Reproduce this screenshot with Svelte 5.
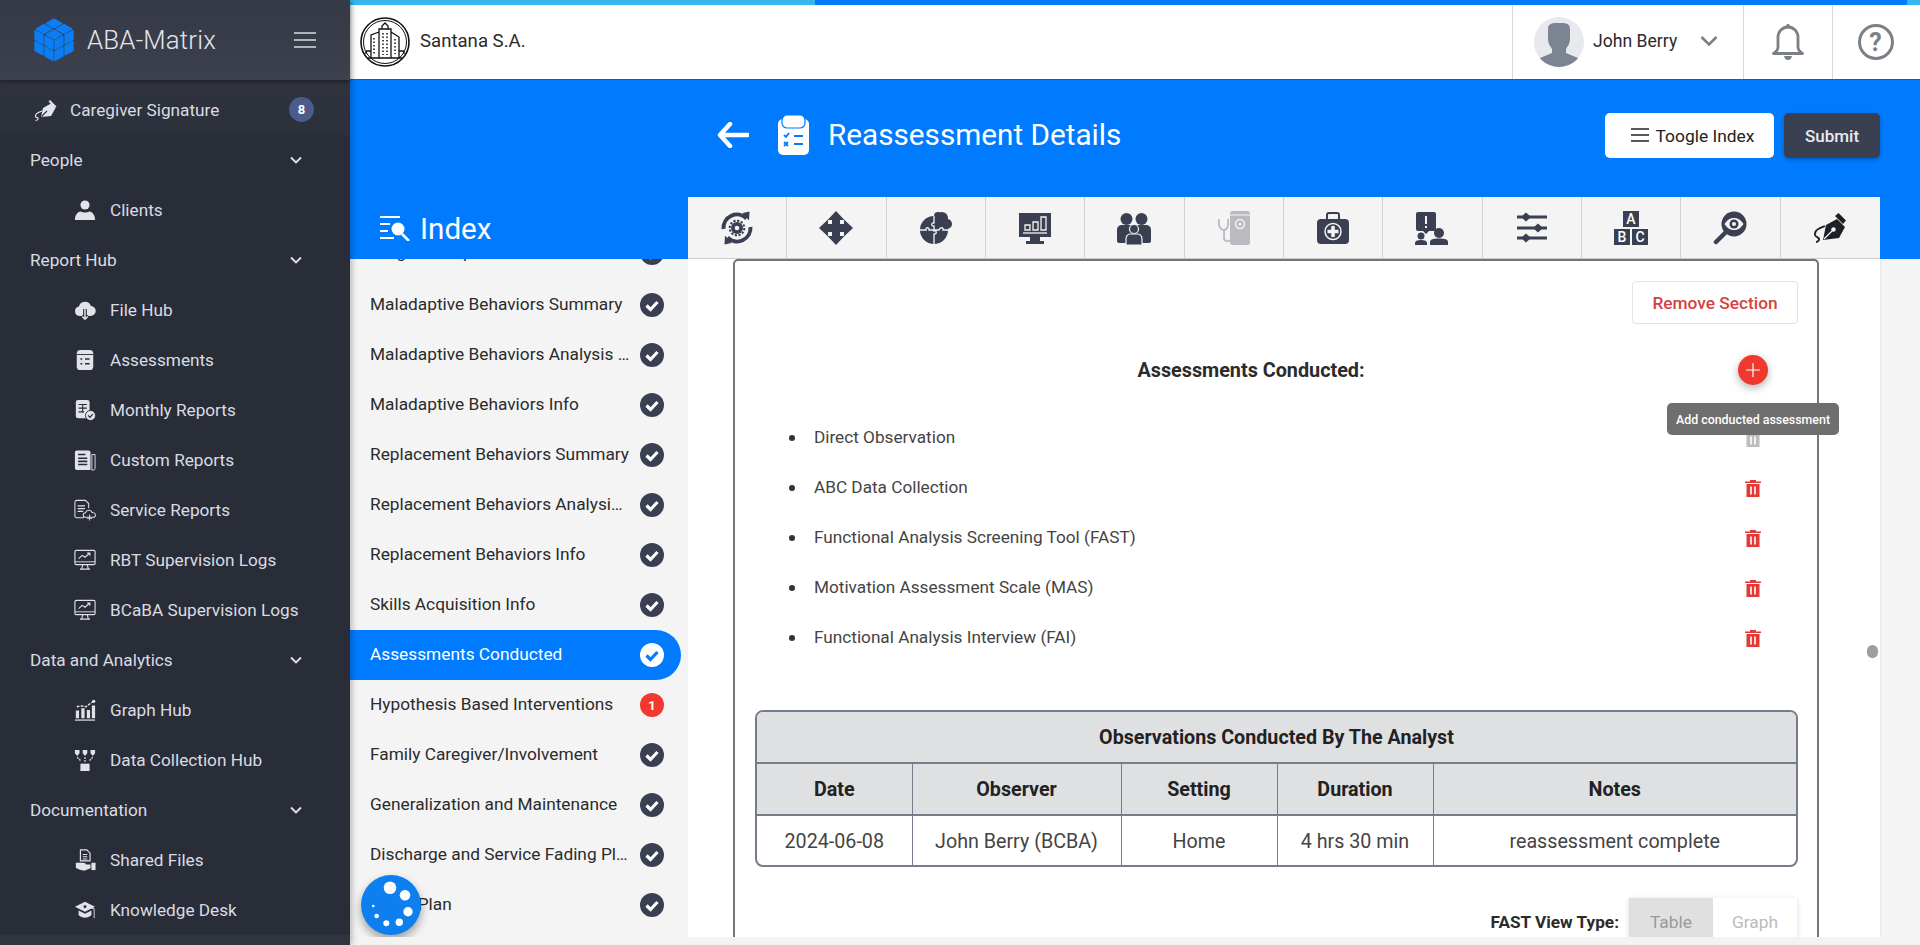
<script>
  const tiles = [];
  const add = (o, u, v) => {
    for (let i = 0; i < 2; i++) for (let j = 0; j < 2; j++) {
      const p = [[i, j], [i + 1, j], [i + 1, j + 1], [i, j + 1]].map(([a, b]) => {
        const ca = i + 0.5, cb = j + 0.5;
        const x = ca + (a - ca) * 0.74, y = cb + (b - cb) * 0.74;
        return `${(o[0] + x * u[0] + y * v[0]).toFixed(1)},${(o[1] + x * u[1] + y * v[1]).toFixed(1)}`;
      });
      tiles.push(p.join(' '));
    }
  };
  add([22, 2], [10, 5.5], [-10, 5.5]);
  add([2, 13], [10, 5.5], [0, 11]);
  add([22, 24], [10, -5.5], [0, 11]);

  const side = {
    pen: '<path d="M7 19l2-9 8-4.500 4.500 4.500-4.500 8z" fill="currentColor"/><path d="M16 2l6.500 6.500-1.500 1.500-6.500-6.500z" fill="currentColor"/><path d="M7.500 18.500l5.500-5.500" stroke="#2e323d" stroke-width="1.100"/><path d="M8 13c-3 1-7 3-6.500 5.500.5 2 3.500 0 2.500 2.500-.5 1-1.500 1.500-2.500 1.500" fill="none" stroke="currentColor" stroke-width="1.200"/>',
    user: '<circle cx="12" cy="6.500" r="5" fill="currentColor"/><path d="M1 23c0-6 3-9 6-9.500 3 1.500 7 1.500 10 0 3 .5 6 3.500 6 9.500z" fill="currentColor"/>',
    cloud: '<path d="M6 18.500a5.200 5.200 0 0 1-.6-10.300A6.800 6.800 0 0 1 18.400 7.500 5.500 5.500 0 0 1 18 18.500z" fill="currentColor"/><path d="M12 11v11M8.500 18.500l3.500 3.500 3.500-3.500" fill="none" stroke="#292d38" stroke-width="4"/><path d="M12 11v11M9 19l3 3 3-3" fill="none" stroke="currentColor" stroke-width="1.600"/>',
    clip: '<rect x="3" y="1" width="18" height="22" rx="4" fill="currentColor"/><path d="M3 6h18" stroke="#292d38" stroke-width="1"/><path d="M7 11h2M7 16h2M12 11h5M12 16h5" stroke="#292d38" stroke-width="1.700"/>',
    doccheck: '<rect x="2" y="1" width="15" height="20" rx="2.500" fill="currentColor"/><path d="M5 6h9M5 10h9M5 14h6M9.500 6v9" stroke="#292d38" stroke-width="1.200"/><circle cx="18" cy="18" r="5.500" fill="currentColor" stroke="#292d38"/><path d="M15.500 18l2 2 3-3.500" fill="none" stroke="#292d38" stroke-width="1.300"/>',
    news: '<path d="M1 3.500A2 2 0 0 1 3 1.500h13a2 2 0 0 1 2 2v19.500H3a2 2 0 0 1-2-2z" fill="currentColor"/><path d="M19.500 6H23v15a2 2 0 0 1-2 2h-1.500z" fill="none" stroke="currentColor" stroke-width="1"/><path d="M4.500 6h8M4.500 10h10M4.500 13.500h10M4.500 17h10" stroke="#292d38" stroke-width="1.700"/>',
    doccloud: '<path d="M16 10V5l-3.500-3.500H3A2 2 0 0 0 1 3.500v15a2 2 0 0 0 2 2h8" fill="none" stroke="currentColor" stroke-width="1.100"/><path d="M4 7.500h8M4 10.500h8M4 13.500h6" stroke="currentColor" stroke-width="1.300"/><path d="M12.500 20a2.500 2.500 0 0 1 0-5 4 4 0 0 1 7.500 0 2.500 2.500 0 0 1 1.500 5z" fill="none" stroke="currentColor" stroke-width="1.100"/><path d="M17 17v6.500M14 21h6" stroke="currentColor" stroke-width="1"/>',
    mon: '<rect x="1" y="1.500" width="22" height="15.500" rx="1.500" fill="none" stroke="currentColor" stroke-width="1.200"/><path d="M1 14h22" stroke="currentColor"/><path d="M5 10.500l4-3.500 3 2 5-4.500M14.500 4.500h2.800v2.800" fill="none" stroke="currentColor" stroke-width="1.200"/><path d="M9.500 17l-1 4.500M14.500 17l1 4.500M6.500 22h11" fill="none" stroke="currentColor" stroke-width="1.200"/>',
    graph: '<path d="M2 12.500h3.500V21H2zM8 10h3.500v11H8zM14 12h3.500v9H14zM19.500 7H23v14h-3.500z" fill="currentColor"/><path d="M1 23h22" stroke="currentColor" stroke-width="1.300"/><path d="M3 8.500l5-1 5 1 8-6" fill="none" stroke="currentColor" stroke-width="1.600" stroke-dasharray="3 1.400"/><circle cx="21.500" cy="2.500" r="1.800" fill="currentColor"/>',
    funnel: '<path d="M1 1h5v3.500l-2.500 3-2.500-3zM9.500 1h5v3.500l-2.500 3-2.500-3zM18 1h5v3.500l-2.500 3-2.500-3z" fill="currentColor"/><path d="M3.500 9l4 4M12 9v5M20.500 9l-4 4" stroke="currentColor" stroke-width="1.400" stroke-dasharray="2 1"/><rect x="7" y="16" width="10" height="8" fill="currentColor"/>',
    hand: '<path d="M7 1h7l3.500 3.500V13H7z" fill="none" stroke="currentColor" stroke-width="1.300"/><path d="M9.500 6h5M9.500 8.500h5M9.500 11h5" stroke="currentColor" stroke-width="1.100"/><path d="M2 15h8c2 0 3 1 3 2h5v4l-6 2.500c-3 0-6-1-8-2l-2-1z" fill="currentColor"/><rect x="19" y="15" width="4.500" height="8" fill="currentColor"/>',
    cap: '<path d="M12 3L1 8.500 12 14l11-5.500z" fill="currentColor"/><path d="M5 12.500v5c2 2 4.500 3 7 3s5-1 7-3v-5l-7 3.500z" fill="currentColor"/><path d="M12 8.500l10 2V21" fill="none" stroke="currentColor" stroke-width="1"/><circle cx="12" cy="8.500" r="1.600" fill="#292d38"/>'
  };

  const nav = [
    { h: 'People', items: [['user', 'Clients']] },
    { h: 'Report Hub', items: [['cloud', 'File Hub'], ['clip', 'Assessments'], ['doccheck', 'Monthly Reports'], ['news', 'Custom Reports'], ['doccloud', 'Service Reports'], ['mon', 'RBT Supervision Logs'], ['mon', 'BCaBA Supervision Logs']] },
    { h: 'Data and Analytics', items: [['graph', 'Graph Hub'], ['funnel', 'Data Collection Hub']] },
    { h: 'Documentation', items: [['hand', 'Shared Files'], ['cap', 'Knowledge Desk']] }
  ];

  const D = '#3a3f51';
  const W = '#f4f4f5';
  const tabs = [
    `<path d="M3.500 18A13.500 13.500 0 0 1 26.500 7.500M30.500 16A13.500 13.500 0 0 1 7.500 26.500" fill="none" stroke="${D}" stroke-width="4"/><path d="M22.500 2l7-1.500-.5 9zM11.500 32l-7 1.500.5-9z" fill="${D}"/><circle cx="17" cy="17" r="6" fill="${D}"/><circle cx="17" cy="17" r="7.300" fill="none" stroke="${D}" stroke-width="2" stroke-dasharray="2.300 1.500"/><circle cx="17" cy="17" r="2.300" fill="${W}"/>`,
    `<path d="M17 0l8.500 9H21v4h4V8.500L34 17l-9 8.500V21h-4v4h4.500L17 34l-8.500-9H13v-4H9v4.500L0 17l9-8.500V13h4V9H8.500z" fill="${D}"/>`,
    `<circle cx="15" cy="19" r="14" fill="${D}"/><circle cx="23" cy="7" r="6" fill="${D}"/><circle cx="28" cy="13" r="5" fill="${D}"/><circle cx="19" cy="5" r="4" fill="${D}"/><path d="M15 5v7c-3-1-3 4 0 3v5c3-1 3 3 0 3v10M1 19h6c-1-3 4-3 3 0h5h5c1-3 5-3 4 0h7" fill="none" stroke="${W}" stroke-width="1.300"/>`,
    `<rect x="1" y="2" width="32" height="24" fill="${D}"/><path d="M12 26h10v4H12zM8 30h18v3H8z" fill="${D}"/><path d="M7 14h5v5H7zM15 11h5v8h-5zM23 6h5v13h-5z" fill="none" stroke="${W}" stroke-width="1.300"/><path d="M5 22h24" stroke="${W}" stroke-width="1.300"/>`,
    `<circle cx="9.500" cy="8" r="6" fill="${D}"/><circle cx="24.500" cy="8" r="6" fill="${D}"/><path d="M0 30V19c0-4 3-5 5-5h9l3 4 3-4h9c2 0 5 1 5 5v11c0 1-1 2-2 2H2c-1 0-2-1-2-2z" fill="${D}"/><circle cx="17" cy="18" r="4.500" fill="${D}" stroke="${W}" stroke-width="1.200"/><path d="M9 34v-6c0-3 2-5 4-5h8c2 0 4 2 4 5v6z" fill="${D}" stroke="${W}" stroke-width="1.200"/>`,
    `<rect x="13" y="0" width="20" height="34" rx="2.500" fill="#b9bbc0"/><circle cx="23" cy="13" r="4.500" fill="none" stroke="${W}" stroke-width="1.500"/><circle cx="23" cy="13" r="1.500" fill="${W}"/><path d="M13 4h20" stroke="${W}"/><path d="M2 8C1 16 4 19 7 19s5-4 4-11M7 19v8c0 4 6 4 8 1l4-3c2-2 3-1 6-1" fill="none" stroke="#b9bbc0" stroke-width="1.800"/>`,
    `<rect x="1" y="8" width="32" height="25" rx="4" fill="${D}"/><path d="M11 8V4a2 2 0 0 1 2-2h8a2 2 0 0 1 2 2v4" fill="none" stroke="${D}" stroke-width="2"/><circle cx="17" cy="20.500" r="8" fill="none" stroke="${W}" stroke-width="1.500"/><path d="M17 15v11M11.500 20.500h11" stroke="${W}" stroke-width="3.500"/>`,
    `<path d="M3 1h16a2 2 0 0 1 2 2v15a2 2 0 0 1-2 2h-5l-3 3-3-3H3a2 2 0 0 1-2-2V3a2 2 0 0 1 2-2z" fill="${D}"/><path d="M11 5v8M11 15v2" stroke="${W}" stroke-width="2"/><circle cx="6" cy="25" r="3.500" fill="${D}"/><path d="M0 34v-2c0-2 2-3 6-3s6 1 6 3v2z" fill="${D}"/><circle cx="24" cy="22" r="5" fill="${D}"/><path d="M15 34v-3c0-2.500 3-3.500 9-3.500s9 1 9 3.500v3z" fill="${D}"/>`,
    `<path d="M2 6h30M2 17h30M2 27h30" stroke="${D}" stroke-width="3"/><path d="M11 1.500l5 4.500-5 4.500-5-4.500zM23 12.500l5 4.500-5 4.500-5-4.500zM11 22.500l5 4.500-5 4.500-5-4.500z" fill="${D}"/>`,
    '',
    `<circle cx="21" cy="13" r="12.500" fill="${D}"/><path d="M11.500 13c3-4.500 6-6 9.500-6s6.500 1.500 9.500 6c-3 4.500-6 6-9.500 6s-6.500-1.500-9.500-6z" fill="${W}"/><circle cx="21" cy="13" r="4.500" fill="${D}"/><circle cx="21" cy="13" r="2" fill="${W}"/><path d="M12 22L3 31" stroke="${D}" stroke-width="4.500" stroke-linecap="round"/>`,
    `<path d="M10 29l3-15 11-6 8 8-6 11z" fill="#1e2028"/><path d="M25.500 2l7.500 7.500-3 3.500-8-8z" fill="#1e2028"/><path d="M11 28l9-9" stroke="${W}" stroke-width="1.300"/><circle cx="20.500" cy="18.500" r="2.200" fill="${W}"/><path d="M12 15C7 17 1 19 2 24c1 3 5 2 4 5-1 2-3 2-3 2" fill="none" stroke="#1e2028" stroke-width="1.800"/>`
  ];

  const indexRows = [
    ['Progress Report', 'ok'], ['Maladaptive Behaviors Summary', 'ok'], ['Maladaptive Behaviors Analysis Summary', 'ok'],
    ['Maladaptive Behaviors Info', 'ok'], ['Replacement Behaviors Summary', 'ok'], ['Replacement Behaviors Analysis Summary', 'ok'],
    ['Replacement Behaviors Info', 'ok'], ['Skills Acquisition Info', 'ok'], ['Assessments Conducted', 'active'],
    ['Hypothesis Based Interventions', 'err'], ['Family Caregiver/Involvement', 'ok'], ['Generalization and Maintenance', 'ok'],
    ['Discharge and Service Fading Plan', 'ok'], ['Crisis Plan', 'ok']
  ];

  const assessments = ['Direct Observation', 'ABC Data Collection', 'Functional Analysis Screening Tool (FAST)', 'Motivation Assessment Scale (MAS)', 'Functional Analysis Interview (FAI)'];
  const cols = ['Date', 'Observer', 'Setting', 'Duration', 'Notes'];
  const vals = ['2024-06-08', 'John Berry (BCBA)', 'Home', '4 hrs 30 min', 'reassessment complete'];
  const dots = [[-1, -17.3, 6.3], [14, -9.7, 5.3], [17, 6.7, 4.7], [8.3, 17.3, 3.7], [-4.7, 18.3, 3], [-14.3, 11, 2.3], [-17.7, 1, 1.3]];
</script>

<div class="app">
  <aside class="sidebar">
    <div class="brand">
      <svg class="cube" viewBox="0 0 44 48">
        {#each tiles as t}<polygon points={t} fill="#0b7df5" stroke="#0b7df5" stroke-width="2" stroke-linejoin="round" />{/each}
      </svg>
      <span class="brand-name">ABA-Matrix</span>
      <svg class="burger" viewBox="0 0 22 16"><path d="M0 1h22M0 8h22M0 15h22" stroke="#d8dbe2" stroke-width="1.500" /></svg>
    </div>
    <div class="sig">
      <svg class="sig-ic" viewBox="0 0 24 24">{@html side.pen}</svg>
      <span class="sig-t">Caregiver Signature</span>
      <span class="badge">8</span>
    </div>
    <nav>
      {#each nav as g}
        <div class="nh">
          <span>{g.h}</span>
          <svg class="chev" viewBox="0 0 12 8"><path d="M1 1.500l5 5 5-5" fill="none" stroke="#e3e5ea" stroke-width="1.800" /></svg>
        </div>
        {#each g.items as it}
          <div class="ni">
            <svg viewBox="0 0 24 24">{@html side[it[0]]}</svg>
            <span>{it[1]}</span>
          </div>
        {/each}
      {/each}
    </nav>
    <div class="side-foot"></div>
  </aside>

  <main>
    <div class="strip"><i class="s1"></i><i class="s2"></i><i class="s3"></i></div>
    <header class="top">
      <svg class="org" viewBox="0 0 50 50">
        <circle cx="25" cy="25" r="24" fill="#fff" stroke="#111" stroke-width="1.600" />
        <circle cx="25" cy="25" r="21.500" fill="none" stroke="#111" stroke-width="1" />
        <path d="M19 41V12h12v29M22 12V9l3-3 3 3v3M11 41V18l8-3M39 41V20l-8-5M6 34h5M39 34h5M6 34v3M44 34v3M8 41h34" fill="none" stroke="#111" stroke-width="1.300" />
        <path d="M23 16v22M27 16v22M14 21v16M35 22v15" stroke="#111" stroke-width="1.500" stroke-dasharray="1.500 2" />
      </svg>
      <span class="org-name">Santana S.A.</span>
      <div class="user">
        <svg class="avatar" viewBox="0 0 50 50">
          <defs><clipPath id="av"><circle cx="25" cy="25" r="25" /></clipPath></defs>
          <circle cx="25" cy="25" r="25" fill="#e8e9ed" />
          <g clip-path="url(#av)">
            <path d="M14 12c0-6 5-6 11-6s11 0 11 6v10c0 5-3 8-4 10v4l12 5c3 2 3 5 3 9H3c0-4 0-7 3-9l12-5v-4c-1-2-4-5-4-10z" fill="#7b8490" />
          </g>
        </svg>
        <span class="uname">John Berry</span>
        <svg class="uchev" viewBox="0 0 18 12"><path d="M1.500 2l7.500 7.500L16.500 2" fill="none" stroke="#7b7f86" stroke-width="2.600" /></svg>
      </div>
      <div class="tool">
        <svg viewBox="0 0 32 38" class="bell">
          <path d="M16 4a10 10 0 0 0-10 10v10c0 3-2 5-4.500 6.500h29C28 29 26 27 26 24V14A10 10 0 0 0 16 4z" fill="none" stroke="#7b7f86" stroke-width="2.800" stroke-linejoin="round" />
          <circle cx="16" cy="3" r="2" fill="#7b7f86" />
          <path d="M12 33h8c-1 3-2 4-4 4s-3-1-4-4z" fill="#7b7f86" />
        </svg>
      </div>
      <div class="tool last">
        <div class="q">?</div>
      </div>
    </header>

    <section class="hero">
      <div class="hero-top">
        <svg class="back" viewBox="0 0 32 26"><path d="M13 2L3 13l10 11M3 13h28" fill="none" stroke="#fff" stroke-width="4.500" stroke-linecap="round" stroke-linejoin="round" /></svg>
        <svg class="page-ic" viewBox="0 0 31 40">
          <rect x="0" y="4" width="31" height="36" rx="5" fill="#fff" />
          <rect x="4" y="0" width="23" height="13" rx="5" fill="#fff" stroke="#007bff" stroke-width="1.200" />
          <path d="M6 20l2 2 3-4M6 27l4 4M10 27l-4 4M16 21h9M16 29h9" fill="none" stroke="#007bff" stroke-width="1.800" />
        </svg>
        <h1>Reassessment Details</h1>
        <div class="actions">
          <button class="toggle">
            <svg viewBox="0 0 18 14"><path d="M0 1h18M0 7h18M0 13h18" stroke="#222" stroke-width="1.500" /></svg>
            Toogle Index
          </button>
          <button class="submit">Submit</button>
        </div>
      </div>
      <div class="hero-bot">
        <div class="idx">
          <svg viewBox="0 0 30 26">
            <path d="M0 2h20M0 9h10M0 16h8M0 23h14" stroke="#fff" stroke-width="2" />
            <circle cx="18" cy="14" r="6.500" fill="#fff" />
            <path d="M22 19l7 7" stroke="#fff" stroke-width="2.600" />
          </svg>
          <span class="idx-t">Index</span>
        </div>
        <div class="tabs">
          {#each tabs as t, i}
            <div class="tab">
              {#if i === 9}
                <svg viewBox="0 0 34 34">
                  <rect x="9" y="0" width="16" height="16" fill="#3a3f51" />
                  <rect x="0" y="18" width="16" height="16" fill="#3a3f51" />
                  <rect x="18" y="18" width="16" height="16" fill="#3a3f51" />
                  <text x="17" y="13" class="blk">A</text>
                  <text x="8" y="31" class="blk">B</text>
                  <text x="26" y="31" class="blk">C</text>
                </svg>
              {:else}
                <svg viewBox="0 0 34 34">{@html t}</svg>
              {/if}
            </div>
          {/each}
        </div>
      </div>
    </section>

    <div class="body">
      <div class="index">
        <ul class="index-list">
          {#each indexRows as r}
            <li class:active={r[1] === 'active'}>
              <span class="lbl">{r[0]}</span>
              {#if r[1] === 'err'}
                <span class="st err">1</span>
              {:else}
                <svg class="st" viewBox="0 0 24 24">
                  <circle cx="12" cy="12" r="12" fill={r[1] === 'active' ? '#fff' : '#3a3f51'} />
                  <path d="M6.500 12.500l4 4 7-7.500" fill="none" stroke={r[1] === 'active' ? '#007bff' : '#fff'} stroke-width="3.200" />
                </svg>
              {/if}
            </li>
          {/each}
        </ul>
        <div class="fab">
          <svg viewBox="0 0 60 60">
            {#each dots as d}<circle cx={30 + d[0]} cy={30 + d[1]} r={d[2]} fill="#fff" />{/each}
          </svg>
        </div>
      </div>

      <div class="content">
        <div class="card">
          <div class="rm-row"><button class="rm">Remove Section</button></div>
          <div class="head-row">
            <h2>Assessments Conducted:</h2>
            <div class="add-col">
              <button class="add" aria-label="Add conducted assessment">
                <svg viewBox="0 0 16 16"><path d="M8 1v14M1 8h14" stroke="#fff" stroke-width="1.200" /></svg>
              </button>
              <div class="tip">Add conducted assessment</div>
            </div>
          </div>
          <ul class="alist">
            {#each assessments as a, i}
              <li>
                <span class="atext">{a}</span>
                <span class="add-col">
                  <svg class="trash" class:dim={i === 0} viewBox="0 0 16 18">
                    <path d="M0 2.500h16v1.500H0zM5 1h6v1.500H5zM1.500 5h13v13h-13z" fill="currentColor" />
                    <path d="M6 7.500v8M10 7.500v8" stroke="#fff" stroke-width="1.600" />
                  </svg>
                </span>
              </li>
            {/each}
          </ul>
          <div class="tbl-wrap">
            <table>
              <colgroup><col class="c1" /><col class="c2" /><col class="c3" /><col class="c4" /><col /></colgroup>
              <thead>
                <tr><th colspan="5" class="cap">Observations Conducted By The Analyst</th></tr>
                <tr>{#each cols as c}<th class="hd">{c}</th>{/each}</tr>
              </thead>
              <tbody>
                <tr>{#each vals as v}<td>{v}</td>{/each}</tr>
              </tbody>
            </table>
          </div>
          <div class="fast">
            <span class="fast-l">FAST View Type:</span>
            <div class="seg">
              <button class="on">Table</button>
              <button>Graph</button>
            </div>
          </div>
        </div>
      </div>
      <div class="gutter"></div>
      <div class="thumb"></div>
    </div>
    <div class="foot"></div>
  </main>
</div>

<style>
  :global(body) { margin: 0; background: #fff; font-family: Roboto, "Liberation Sans", sans-serif; }
  .app { display: flex; width: 1920px; height: 945px; overflow: hidden; }
  .sidebar { width: 350px; flex: none; display: flex; flex-direction: column; background: #292d38; color: #d9dce3; position: relative; z-index: 3; box-shadow: 2px 0 6px rgba(0,0,0,.25); }
  .brand { height: 80px; flex: none; display: flex; align-items: center; padding: 0 34px 0 32px; box-sizing: border-box; background: linear-gradient(#353945, #3d414e); box-shadow: 0 2px 4px rgba(0,0,0,.35); position: relative; z-index: 1; }
  .cube { width: 44px; height: 48px; }
  .brand-name { margin-left: 11px; font-size: 25.8px; font-weight: 300; color: #e4e6ea; letter-spacing: .2px; }
  .burger { width: 22px; height: 16px; margin-left: auto; }
  .sig { height: 55px; flex: none; display: flex; align-items: center; padding: 4px 36px 0 34px; box-sizing: border-box; background: linear-gradient(#2f333e, #2c303b); }
  .sig-ic { width: 24px; height: 24px; color: #e4e6ea; }
  .sig-t { margin-left: 12px; font-size: 17.2px; }
  .badge { margin-left: auto; width: 25px; height: 25px; border-radius: 50%; background: #4d5a8c; color: #fff; font-size: 13px; font-weight: 700; display: flex; align-items: center; justify-content: center; }
  nav { flex: 1; }
  .nh { height: 50px; display: flex; align-items: center; padding: 0 48px 0 30px; font-size: 17.2px; }
  .chev { width: 12px; height: 8px; margin-left: auto; }
  .ni { height: 50px; display: flex; align-items: center; padding-left: 74px; font-size: 17.2px; }
  .ni svg { width: 22px; height: 22px; margin-right: 14px; color: #e1e3e8; flex: none; }
  .side-foot { height: 10px; flex: none; background: #30343f; }

  main { flex: 1; min-width: 0; display: flex; flex-direction: column; position: relative; }
  .strip { height: 5px; flex: none; display: flex; }
  .strip i { display: block; }
  .s1 { width: 465px; background: #35b6ee; }
  .s2 { flex: 1; background: #007bff; }
  .s3 { width: 13px; background: #35b6ee; }
  .top { height: 75px; flex: none; box-sizing: border-box; display: flex; align-items: center; padding-left: 10px; background: #fff; border-bottom: 1px solid #0063c8; }
  .org { width: 50px; height: 50px; }
  .org-name { margin-left: 10px; font-size: 18.6px; color: #2a2a2a; margin-bottom: 2px; }
  .user { margin-left: auto; height: 100%; width: 231px; box-sizing: border-box; display: flex; align-items: center; padding-left: 21px; border-left: 1px solid #d9d9d9; }
  .avatar { width: 50px; height: 50px; }
  .uname { margin-left: 9px; font-size: 17.6px; color: #2a2a2a; margin-bottom: 2px; }
  .uchev { width: 18px; height: 12px; margin-left: 23px; margin-top: -3px; }
  .tool { height: 100%; width: 89px; box-sizing: border-box; border-left: 1px solid #d9d9d9; display: flex; align-items: center; justify-content: center; }
  .tool.last { width: 88px; }
  .bell { width: 32px; height: 38px; }
  .q { width: 36px; height: 36px; box-sizing: border-box; border: 3px solid #7b7f86; border-radius: 50%; color: #7b7f86; font-size: 25px; font-weight: 700; display: flex; align-items: center; justify-content: center; line-height: 1; margin-right: 2px; }

  .hero { height: 179px; flex: none; background: #007bff; display: flex; flex-direction: column; }
  .hero-top { height: 117px; flex: none; display: flex; align-items: center; box-sizing: border-box; padding: 0 40px 7px 367px; color: #fff; }
  .back { width: 32px; height: 26px; }
  .page-ic { width: 31px; height: 40px; margin-left: 29px; }
  h1 { margin: 0 0 2px 19px; font-size: 29.7px; font-weight: 400; }
  .actions { margin-left: auto; display: flex; gap: 10px; }
  button { font-family: inherit; cursor: pointer; }
  .toggle { width: 169px; height: 45px; border: 0; border-radius: 5px; background: #fff; color: #222; font-size: 17.4px; display: flex; align-items: center; justify-content: center; gap: 7px; padding: 2px 0 0 6px; }
  .toggle svg { width: 18px; height: 14px; margin-top: -2px; }
  .submit { width: 96px; height: 45px; border: 0; border-radius: 5px; background: #3a3f51; color: #e9eaee; font-size: 17px; font-weight: 500; box-shadow: 0 2px 4px rgba(0,0,0,.25); padding-top: 2px; }
  .hero-bot { flex: 1; display: flex; padding-right: 40px; }
  .idx { width: 338px; flex: none; display: flex; align-items: center; gap: 10px; padding-left: 30px; box-sizing: border-box; color: #fff; font-size: 29.6px; }
  .idx svg { width: 30px; height: 26px; }
  .idx-t { margin-top: 2px; }
  .tabs { flex: 1; display: grid; grid-template-columns: repeat(12, 1fr); background: #f4f4f5; border-bottom: 1px solid #ccc; box-sizing: border-box; }
  .tab { display: flex; align-items: center; justify-content: center; border-right: 1px solid #d2d2d2; }
  .tab:last-child { border-right: 0; }
  .tab svg { width: 34px; height: 34px; }
  .blk { font-family: Roboto, sans-serif; font-size: 14px; font-weight: 500; fill: #fff; text-anchor: middle; }

  .body { flex: 1; min-height: 0; display: flex; position: relative; overflow: hidden; }
  .index { width: 338px; flex: none; background: #f4f4f5; overflow: hidden; position: relative; }
  .index-list { list-style: none; margin: -29px 0 0; padding: 0 7px 0 0; }
  .index-list li { height: 50px; display: flex; align-items: center; padding: 0 17px 0 20px; font-size: 17.3px; color: #2b2b2b; }
  .index-list li:first-child { padding-bottom: 4px; box-sizing: border-box; }
  .lbl { flex: 1; min-width: 0; white-space: nowrap; overflow: hidden; text-overflow: ellipsis; margin-right: 10px; margin-top: -2px; }
  .index-list li.active { background: #007bff; color: #fff; border-radius: 0 25px 25px 0; }
  .st { width: 24px; height: 24px; flex: none; }
  .st.err { border-radius: 50%; background: #f2392f; color: #fff; font-size: 13px; font-weight: 700; display: flex; align-items: center; justify-content: center; }
  .fab { position: absolute; left: 11px; bottom: 2px; width: 60px; height: 60px; border-radius: 50%; background: #0d7fee; box-shadow: 0 5px 10px rgba(0,0,0,.35); }
  .fab svg { display: block; width: 60px; height: 60px; }

  .content { flex: 1; min-width: 0; background: #fff; padding-left: 45px; padding-right: 61px; overflow: hidden; }
  .card { border: 2px solid #757575; border-bottom: 0; border-radius: 5px 5px 0 0; padding: 0 19px; height: 800px; box-sizing: border-box; position: relative; }
  .rm-row { display: flex; justify-content: flex-end; padding-top: 20px; }
  .rm { width: 166px; height: 43px; background: #fff; border: 1px solid #e2e2e2; border-radius: 4px; color: #d4423f; font-size: 17.3px; font-weight: 500; }
  .head-row { height: 50px; margin-top: 21px; display: flex; align-items: center; padding-left: 40px; }
  h2 { flex: 1; margin: 0; text-align: center; font-size: 19.8px; font-weight: 700; color: #2b2b2b; }
  .add-col { width: 90px; flex: none; display: flex; justify-content: center; position: relative; }
  .add { width: 30px; height: 30px; padding: 0; border: 0; border-radius: 50%; background: #f0392e; box-shadow: 0 3px 8px rgba(0,0,0,.3); display: flex; align-items: center; justify-content: center; }
  .add svg { width: 16px; height: 16px; }
  .tip { position: absolute; top: 48px; left: -41px; width: 172px; height: 32px; background: #6e6e6e; color: #fff; border-radius: 5px; font-size: 12.4px; font-weight: 500; display: flex; align-items: center; justify-content: center; white-space: nowrap; z-index: 2; }
  .alist { margin: 17px 0 0; padding: 0 0 0 60px; list-style: none; color: #444; }
  .alist li { height: 50px; font-size: 17.2px; position: relative; }
  .alist li::before { content: ""; position: absolute; left: -25px; top: 23px; width: 6px; height: 6px; border-radius: 50%; background: #333; }
  .atext { line-height: 50px; }
  .alist .add-col { position: absolute; right: 0; top: 0; height: 50px; align-items: center; }
  .trash { width: 16px; height: 18px; color: #e33a36; margin-top: 1px; }
  .trash.dim { color: #bdbdbd; }
  .tbl-wrap { margin: 48px 0 0 1px; border: 2px solid #757d8a; border-radius: 8px; overflow: hidden; height: 157px; box-sizing: border-box; }
  table { width: 100%; table-layout: fixed; border-collapse: collapse; color: #333; font-size: 19.7px; text-align: center; }
  .c1 { width: 155px; }
  .c2 { width: 209px; }
  .c3 { width: 156px; }
  .c4 { width: 156px; }
  th { background: #dfe0e2; font-weight: 700; border: 1px solid #757d8a; border-top: 0; color: #222; padding: 0; }
  .cap { height: 50px; border-bottom-width: 2px; }
  .hd { height: 50px; border-bottom-width: 2px; }
  td { height: 50px; padding: 0; border: 1px solid #757d8a; border-bottom: 0; border-top: 0; color: #444; }
  th:first-child, td:first-child { border-left: 0; }
  th:last-child, td:last-child { border-right: 0; }
  .fast { margin-top: 31px; display: flex; justify-content: flex-end; align-items: flex-start; padding-right: 1px; }
  .fast-l { font-size: 17.2px; font-weight: 700; color: #2b2b2b; line-height: 48px; margin-right: 10px; }
  .seg { display: flex; box-shadow: 0 1px 5px rgba(0,0,0,.15); }
  .seg button { width: 84px; height: 48px; border: 0; background: #fff; color: #bbb; font-size: 17.4px; }
  .seg .on { background: #e0e0e0; color: #999; }
  .gutter { width: 40px; flex: none; background: #f4f4f5; box-shadow: inset 1px 0 1px #e8e8e8; }
  .thumb { position: absolute; left: 1517px; top: 386px; width: 11px; height: 13px; border-radius: 6px; background: #9e9e9e; }
  .foot { height: 8px; flex: none; background: #f3f3f4; }
</style>
